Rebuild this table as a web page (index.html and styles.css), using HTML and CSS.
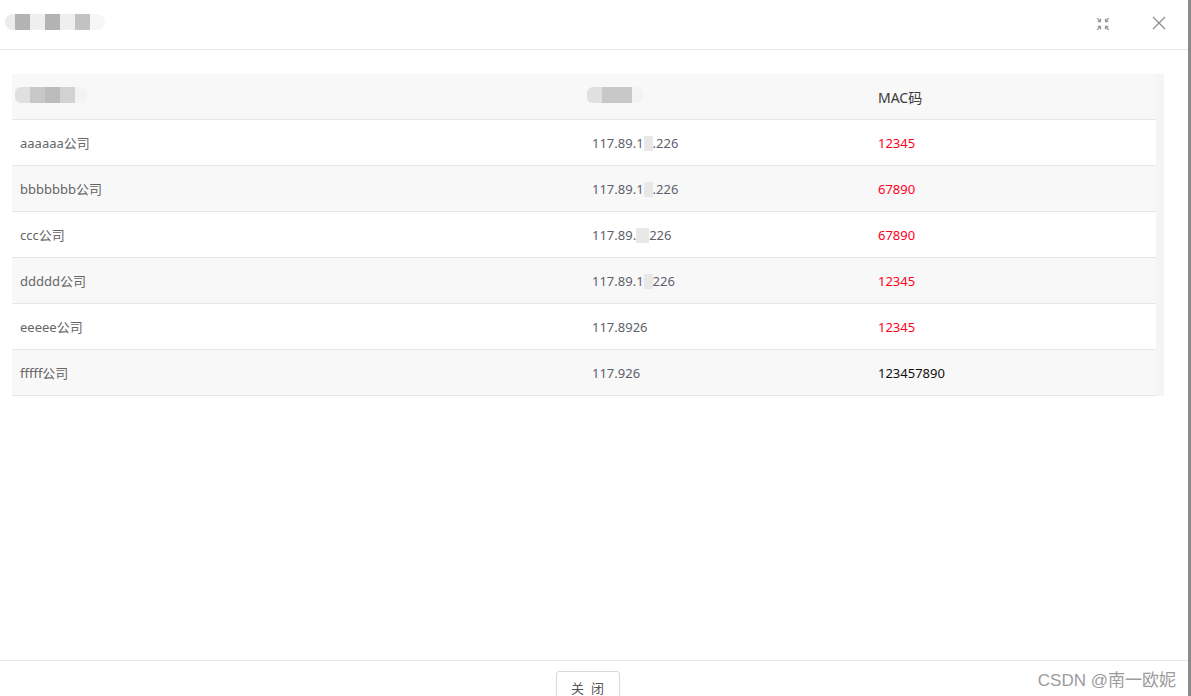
FILE: index.html
```html
<!DOCTYPE html>
<html lang="zh">
<head>
<meta charset="utf-8">
<title>dialog</title>
<link rel="stylesheet" href="styles.css">
</head>
<body>
<div class="dialog">
  <div class="dlg-head">
    <div class="title-blur">
      <span class="tb tb0"></span><span class="tb tb1"></span><span class="tb tb2"></span><span class="tb tb1"></span><span class="tb tb2"></span><span class="tb tb3"></span><span class="tb tb4"></span>
    </div>
    <div class="head-tools">
      <svg class="ico" width="14" height="14" viewBox="0 0 14 14" fill="none" stroke="#999" stroke-width="1.3" stroke-linecap="round">
        <path d="M1.5 1.5 L4.5 4.5 M4.5 2.2 V4.5 H2.2"/>
        <path d="M12.5 1.5 L9.5 4.5 M9.5 2.2 V4.5 H11.8"/>
        <path d="M1.5 12.5 L4.5 9.5 M4.5 11.8 V9.5 H2.2"/>
        <path d="M12.5 12.5 L9.5 9.5 M9.5 11.8 V9.5 H11.8"/>
      </svg>
      <svg class="ico close" width="14" height="14" viewBox="0 0 14 14" fill="none" stroke="#8c8c8c" stroke-width="1.2">
        <path d="M1 1 L13 13 M13 1 L1 13"/>
      </svg>
    </div>
  </div>
  <div class="dlg-body">
    <div class="table">
      <div class="thead">
        <div class="tr">
          <div class="th c1"><span class="hb"><span class="hb1"></span><span class="hb2"></span><span class="hb3"></span><span class="hb4"></span><span class="hb5"></span></span></div>
          <div class="th c2"><span class="hb"><span class="hb1"></span><span class="hb2 w30"></span><span class="hb5"></span></span></div>
          <div class="th c3">MAC码</div>
        </div>
        <div class="gutter"></div>
      </div>
      <div class="tbody-wrap">
        <div class="tbody">
          <div class="tr">
            <div class="td c1">aaaaaa公司</div>
            <div class="td c2 ip">117.89.1<span class="mask"></span>.226</div>
            <div class="td c3 red">12345</div>
          </div>
          <div class="tr striped">
            <div class="td c1">bbbbbbb公司</div>
            <div class="td c2 ip">117.89.1<span class="mask"></span>.226</div>
            <div class="td c3 red">67890</div>
          </div>
          <div class="tr">
            <div class="td c1">ccc公司</div>
            <div class="td c2 ip">117.89.<span class="mask wide"></span>226</div>
            <div class="td c3 red">67890</div>
          </div>
          <div class="tr striped">
            <div class="td c1">ddddd公司</div>
            <div class="td c2 ip">117.89.1<span class="mask"></span>226</div>
            <div class="td c3 red">12345</div>
          </div>
          <div class="tr">
            <div class="td c1">eeeee公司</div>
            <div class="td c2 ip">117.8926</div>
            <div class="td c3 red">12345</div>
          </div>
          <div class="tr striped">
            <div class="td c1">fffff公司</div>
            <div class="td c2 ip">117.926</div>
            <div class="td c3 dark">123457890</div>
          </div>
        </div>
        <div class="gutter"></div>
      </div>
    </div>
  </div>
  <div class="dlg-foot">
    <button class="btn">关&nbsp;闭</button>
    <div class="watermark">CSDN @南一欧妮</div>
  </div>
</div>
</body>
</html>
```

FILE: styles.css
```css
* { box-sizing: border-box; }
html, body { margin: 0; padding: 0; }
body {
  background: #8a8a8a;
  width: 1191px;
  height: 696px;
  overflow: hidden;
  font-family: "Noto Sans", "Noto Sans CJK SC", sans-serif;
  font-size: 13px;
}
.dialog {
  width: 1188px;
  height: 696px;
  background: #fff;
  display: flex;
  flex-direction: column;
}
.dlg-head {
  height: 50px;
  border-bottom: 1px solid #e8e8e8;
  display: flex;
  align-items: flex-start;
  justify-content: space-between;
  padding: 14px 0 0 5px;
  flex: none;
}
.title-blur { display: flex; height: 16px; }
.tb { display: block; height: 16px; width: 15px; }
.tb0 { width: 10px; background: #ececec; border-radius: 8px 0 0 8px; }
.tb1 { background: #b3b3b3; }
.tb2 { background: #efefef; }
.tb3 { background: #c2c2c2; }
.tb4 { background: #f6f6f6; border-radius: 0 8px 8px 0; }
.head-tools {
  display: flex;
  gap: 42px;
  padding-top: 3px;
  padding-right: 22px;
}
.ico { display: block; }
.close { margin-top: -1px; }
.dlg-body {
  flex: 1;
  padding: 24px 24px 0 12px;
}
.table { width: 1152px; }
.thead, .tbody-wrap { display: flex; }
.gutter { width: 8px; background: #f5f5f5; flex: none; }
.thead { background: #f8f8f8; }
.tbody { width: 1144px; }
.tr {
  display: flex;
  height: 46px;
  border-bottom: 1px solid #e6e6e6;
  align-items: center;
}
.thead .tr { height: 46px; width: 1144px; }
.tr.striped { background: #f8f8f8; }
.th, .td { padding: 0 8px; white-space: nowrap; }
.c1 { width: 572px; }
.c2 { width: 286px; }
.c3 { width: 286px; }
.th { color: #3a3a3a; font-size: 14px; }
.td { color: #666; }
.ip { color: #5f5f6d; }
.red { color: #ff0022; }
.dark { color: #111; }
.hb { display: inline-flex; height: 16px; margin-left: -5px; margin-top: 1px; }
.hb span { display: block; height: 16px; width: 15px; }
.hb1 { background: #e0e0e0; border-radius: 6px 0 0 6px; }
.hb2 { background: #c8c8c8; }
.hb3 { background: #bcbcbc; }
.hb4 { background: #d2d2d2; }
.hb5 { background: #f3f3f3; border-radius: 0 8px 8px 0; width: 12px !important; }
.hb .w30 { width: 30px; }
.mask {
  display: inline-block;
  width: 9px;
  height: 15px;
  background: #e8e8e8;
  vertical-align: -3px;
}
.mask.wide { width: 13px; }
.dlg-foot {
  height: 36px;
  border-top: 1px solid #e8e8e8;
  flex: none;
  display: flex;
  justify-content: center;
  padding-top: 10px;
  padding-right: 13px;
  position: relative;
}
.btn {
  width: 64px;
  height: 32px;
  border: 1px solid #d9d9d9;
  border-radius: 3px;
  background: #fff;
  color: #555;
  font-family: "Noto Sans CJK SC", sans-serif;
  font-size: 13px;
  letter-spacing: 2px;
  padding: 0 0 0 2px;
  align-self: flex-start;
}
.watermark {
  position: absolute;
  right: 12px;
  top: 5px;
  font-family: "Liberation Sans", "Noto Sans CJK SC", sans-serif;
  font-size: 17px;
  color: #9c9c9c;
}
```
